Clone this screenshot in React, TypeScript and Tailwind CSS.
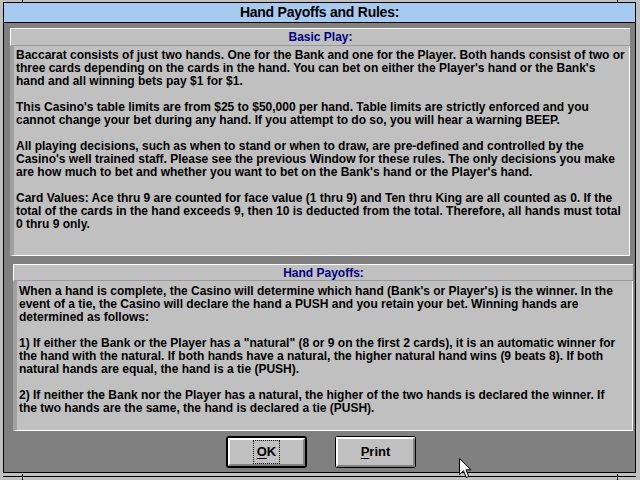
import React from 'react';

// Rules text, one entry per printed line ('' = blank line)
const basicPlay = [
  'Baccarat consists of just two hands. One for the Bank and one for the Player. Both hands consist of two or',
  "three cards depending on the cards in the hand. You can bet on either the Player's hand or the Bank's",
  'hand and all winning bets pay $1 for $1.',
  '',
  "This Casino's table limits are from $25 to $50,000 per hand. Table limits are strictly enforced and you",
  'cannot change your bet during any hand. If you attempt to do so, you will hear a warning BEEP.',
  '',
  'All playing decisions, such as when to stand or when to draw, are pre-defined and controlled by the',
  "Casino's well trained staff. Please see the previous Window for these rules. The only decisions you make",
  "are how much to bet and whether you want to bet on the Bank's hand or the Player's hand.",
  '',
  'Card Values: Ace thru 9 are counted for face value (1 thru 9) and Ten thru King are all counted as 0. If the',
  'total of the cards in the hand exceeds 9, then 10 is deducted from the total. Therefore, all hands must total',
  '0 thru 9 only.',
];

const handPayoffs = [
  "When a hand is complete, the Casino will determine which hand (Bank's or Player's) is the winner. In the",
  'event of a tie, the Casino will declare the hand a PUSH and you retain your bet. Winning hands are',
  'determined as follows:',
  '',
  '1) If either the Bank or the Player has a "natural" (8 or 9 on the first 2 cards), it is an automatic winner for',
  'the hand with the natural. If both hands have a natural, the higher natural hand wins (9 beats 8). If both',
  'natural hands are equal, the hand is a tie (PUSH).',
  '',
  '2) If neither the Bank nor the Player has a natural, the higher of the two hands is declared the winner. If',
  'the two hands are the same, the hand is declared a tie (PUSH).',
];

function Lines({ lines }: { lines: string[] }) {
  return (
    <>
      {lines.map((line, i) => (
        <div key={i} className="h-[13px] leading-[13px] whitespace-pre">
          {line || '\u00a0'}
        </div>
      ))}
    </>
  );
}

function Panel({
  title,
  lines,
  headerH,
  bodyH,
  padTop,
}: {
  title: string;
  lines: string[];
  headerH: string;
  bodyH: string;
  padTop: string;
}) {
  return (
    <div className="w-[620px] flex flex-col">
      <div
        className={`${headerH} flex items-center justify-center bg-[#c0c0c0] border-t border-l border-white border-b border-b-[#9a9a9a] text-[12px] font-bold text-[#000080]`}
      >
        {title}
      </div>
      <div
        className={`${bodyH} ${padTop} bg-[#c0c0c0] border-l-4 border-l-[#a0a0a0] border-r border-b border-r-white border-b-white pl-[2px] text-[12px] font-bold text-black`}
      >
        <Lines lines={lines} />
      </div>
    </div>
  );
}

function WinButton({ label, hotkey, isDefault }: { label: string; hotkey: string; isDefault?: boolean }) {
  const rest = label.slice(1);
  return (
    <button
      className={`w-[81px] h-[32px] rounded-[3px] bg-black ${isDefault ? 'p-[2px]' : 'p-[1px]'}`}
    >
      <div className="w-full h-full bg-[#c0c0c0] border-t-2 border-l-2 border-white border-r-2 border-b-2 border-r-[#808080] border-b-[#808080] flex items-center justify-center text-[13px] font-bold text-black">
        <span className={isDefault ? 'border border-dotted border-black px-[3px] py-[1px]' : ''}>
          <span className="underline underline-offset-2">{hotkey}</span>
          {rest}
        </span>
      </div>
    </button>
  );
}

export default function App() {
  return (
    <div className="relative w-[640px] h-[480px] overflow-hidden bg-[#c0c0c0] pt-[2px] pl-[3px] pr-[4px] font-['Liberation_Sans',Arial,sans-serif]">
      {/* frame corner notches */}
      <div className="absolute left-[22px] top-0 w-px h-[2px] bg-black" />
      <div className="absolute left-[617px] top-0 w-px h-[2px] bg-black" />
      <div className="absolute left-[22px] top-[474px] w-px h-[6px] bg-black" />
      <div className="absolute left-[617px] top-[474px] w-px h-[6px] bg-black" />

      <div className="flex flex-col border border-black">
        <div className="h-[20px] bg-[#a6caf0] border-b border-black flex items-center justify-center text-[14px] font-bold tracking-[-0.25px] text-black">
          Hand Payoffs and Rules:
        </div>

        <div className="h-[449px] bg-[#808080] flex flex-col pt-[5px]">
          <div className="ml-[6px]">
            <Panel
              title="Basic Play:"
              lines={basicPlay}
              headerH="h-[18px]"
              bodyH="h-[210px]"
              padTop="pt-[3px]"
            />
          </div>
          <div className="ml-[9px] mt-[8px]">
            <Panel
              title="Hand Payoffs:"
              lines={handPayoffs}
              headerH="h-[17px]"
              bodyH="h-[150px]"
              padTop="pt-[4px]"
            />
          </div>
          <div className="mt-[5px] flex gap-[28px] pl-[222px]">
            <WinButton label="OK" hotkey="O" isDefault />
            <WinButton label="Print" hotkey="P" />
          </div>
        </div>
      </div>
      <div className="mt-[3px] h-px bg-black" />

      {/* mouse pointer */}
      <svg className="absolute left-[459px] top-[458px]" width="13" height="21" viewBox="0 0 13 21">
        <path
          d="M0.5 0.5 L0.5 16.5 L4.5 12.8 L7.3 19.5 L9.8 18.5 L7 11.8 L12 11.8 Z"
          fill="white"
          stroke="black"
          strokeWidth="1"
        />
      </svg>
    </div>
  );
}
